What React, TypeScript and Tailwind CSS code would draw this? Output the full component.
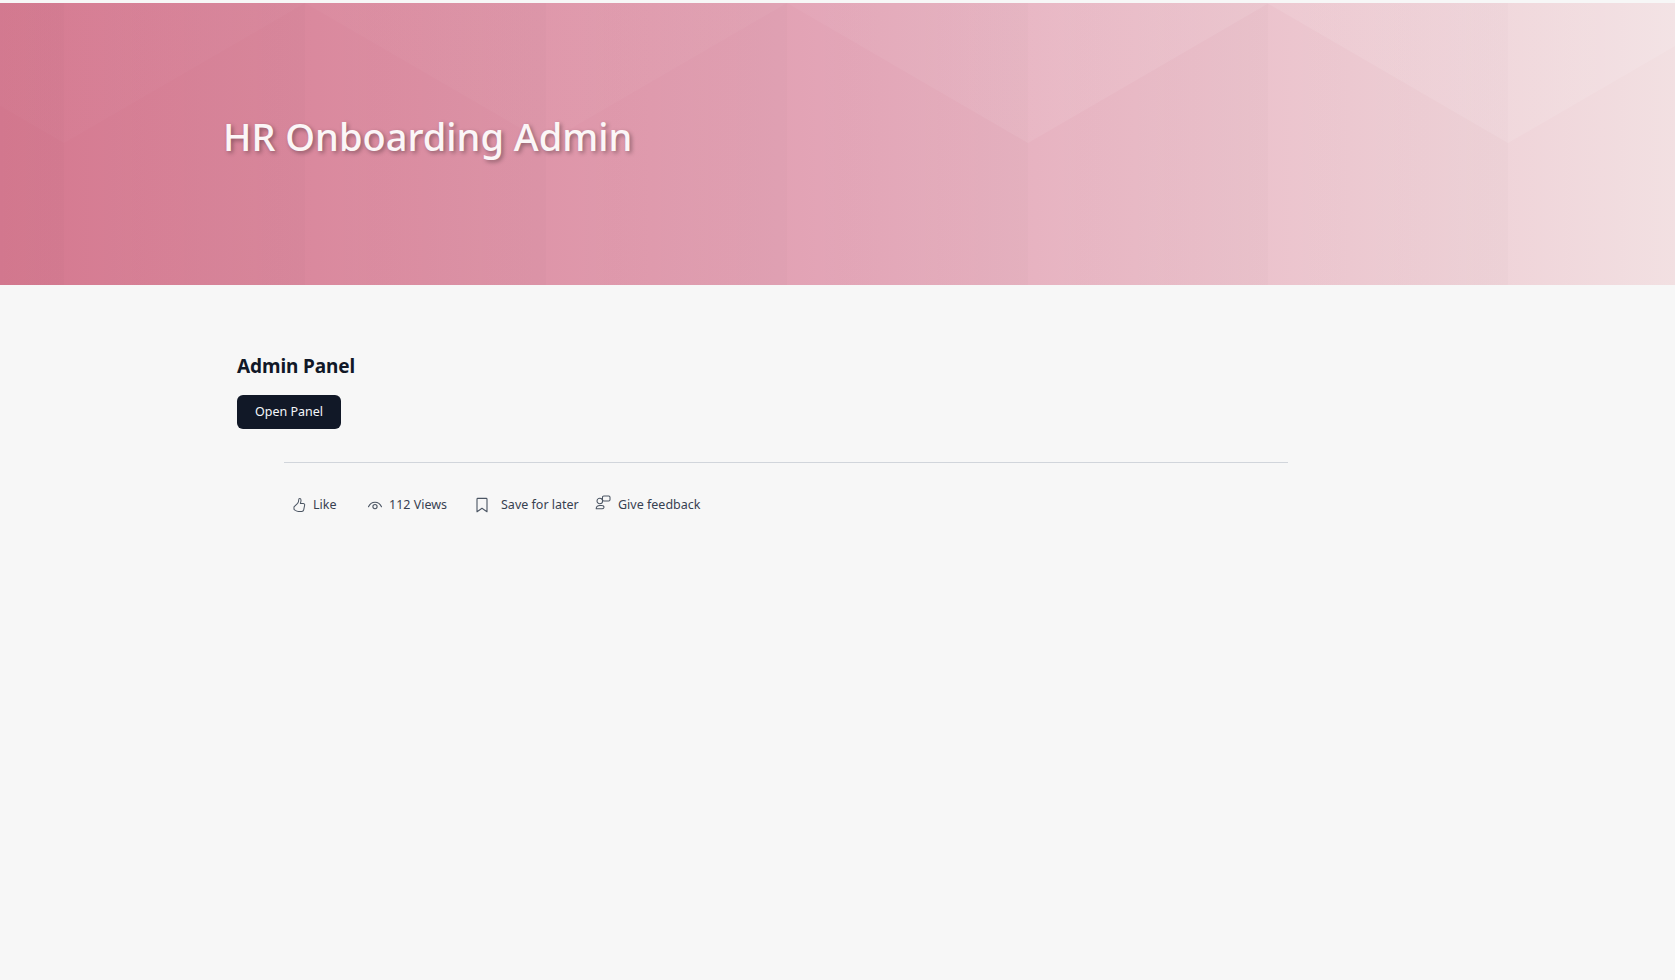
const sans = "font-['Noto_Sans',sans-serif]"

function LikeIcon() {
  return (
    <svg width="16" height="16" viewBox="1 0 14 15" fill="none" stroke="#4b5563" strokeWidth="0.95" strokeLinejoin="round">
      <path d="M8.600 1.500c.9 0 1.300.7 1.300 1.600 0 .9-.3 2-.6 2.900h2.600c1 0 1.600.8 1.400 1.700l-.9 4.400c-.2.9-.9 1.400-1.800 1.400H7.400c-1.200 0-2-.4-2.900-1l-1.200-.9V9.200L6.700 6c.7-.8 1-1.900 1-3.200 0-.8.3-1.300.9-1.300Z" />
    </svg>
  )
}

function EyeIcon() {
  return (
    <svg width="16" height="16" viewBox="0 0 16 16" fill="none" stroke="#4b5563" strokeWidth="1.100" strokeLinecap="round">
      <path d="M1.500 9.800C2.800 6.800 5.200 5.200 8 5.200s5.200 1.600 6.500 4.600" />
      <circle cx="8" cy="9.600" r="2.100" />
    </svg>
  )
}

function BookmarkIcon() {
  return (
    <svg width="16" height="16" viewBox="0 0 16 16" fill="none" stroke="#4b5563" strokeWidth="1.100" strokeLinejoin="round" className="-translate-x-[1px]">
      <path d="M3 2.200c0-.5.3-.8.8-.8h8.400c.5 0 .8.3.8.8v12.600L8 11.300l-5 3.500V2.200Z" />
    </svg>
  )
}

function FeedbackIcon() {
  return (
    <svg width="16" height="16" viewBox="0 0 16 16" fill="none" stroke="#4b5563" strokeWidth="1.050" strokeLinejoin="round" className="-translate-y-[2px]">
      <rect x="7.500" y="1" width="7.500" height="5" rx="1.300" />
      <circle cx="4.800" cy="6" r="2.800" />
      <path d="M1.200 13.800c0-2.100 1.300-3.300 3.700-3.300h1.600c1.500 0 2.500.6 2.500 1.700 0 1.100-.9 1.600-2 1.600H1.200Z" />
    </svg>
  )
}

function HeroPattern() {
  const apexes = [64, 546, 1028, 1508]
  const lines = [64, 305, 546, 787, 1028, 1268, 1508]
  return (
    <svg className="absolute inset-0 w-full h-full" viewBox="0 0 1675 282" preserveAspectRatio="none">
      <defs>
        <linearGradient id="col" x1="0" x2="1" y1="0" y2="0">
          <stop offset="0" stopColor="#000" stopOpacity="0" />
          <stop offset="1" stopColor="#000" stopOpacity="0.014" />
        </linearGradient>
        <linearGradient id="tri" gradientUnits="userSpaceOnUse" x1="0" x2="1675" y1="0" y2="0">
          <stop offset="0" stopColor="#fff" stopOpacity="0.015" />
          <stop offset="0.45" stopColor="#fff" stopOpacity="0.03" />
          <stop offset="0.7" stopColor="#fff" stopOpacity="0.08" />
          <stop offset="1" stopColor="#fff" stopOpacity="0.1" />
        </linearGradient>
      </defs>
      {lines.map((x) => (
        <rect key={x} x={x - 241} y="0" width="241" height="282" fill="url(#col)" />
      ))}
      {apexes.map((x) => (
        <polygon key={x} points={`${x - 241},0 ${x + 241},0 ${x},140`} fill="url(#tri)" />
      ))}
    </svg>
  )
}

export default function App() {
  return (
    <div className={`min-h-screen bg-[#f7f7f7] pt-[3px] ${sans}`}>
      <header className="relative h-[282px] overflow-hidden bg-gradient-to-r from-[#d4788f] via-[#e3a5b7] to-[#f2e0e2]">
        <HeroPattern />
        <h1 className="relative pl-[223px] pt-[107px] text-[38px] leading-[52px] font-medium text-[#fbf6f7] [text-shadow:2px_2px_4px_rgba(0,0,0,0.35)]">
          HR Onboarding Admin
        </h1>
      </header>

      <main className="pl-[237px] pt-[65px]">
        <h2 className="text-[19px] leading-[32px] font-bold tracking-[-0.1px] text-[#111827]">Admin Panel</h2>
        <button className="mt-[13px] h-[34px] w-[104px] rounded-md bg-[#111827] text-[12.5px] text-[#f5f7fa]">
          Open Panel
        </button>

        <div className="ml-[47px] mt-[33px] w-[1004px] border-t border-[#d1d5db]" />

        <div className="ml-[54px] mt-[32px] flex items-center text-[12.5px] leading-5 text-[#374151]">
          <span className="flex w-[76px] items-center gap-[6px]">
            <LikeIcon />
            Like
          </span>
          <span className="flex w-[108px] items-center gap-[6px]">
            <EyeIcon />
            112 Views
          </span>
          <span className="flex w-[120px] items-center gap-[10px]">
            <BookmarkIcon />
            Save for later
          </span>
          <span className="flex items-center gap-[7px]">
            <FeedbackIcon />
            Give feedback
          </span>
        </div>
      </main>
    </div>
  )
}
